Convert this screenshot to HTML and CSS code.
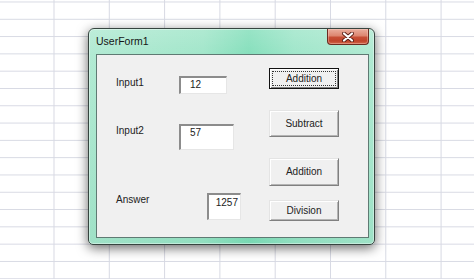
FILE: index.html
```html
<!DOCTYPE html>
<html lang="en">
<head>
    <meta charset="UTF-8">
    <meta name="viewport" content="width=device-width, initial-scale=1.0">
    <title>UserForm1</title>
    <link rel="stylesheet" href="styles.css">
</head>
<body>
    <div class="window">
        <div class="titlebar">
            <span class="title">UserForm1</span>
            <div class="close-btn">
                <svg width="12" height="10" viewBox="0 0 12 10">
                    <path d="M2 1.5 L10 8.5 M10 1.5 L2 8.5" stroke="#5a1f16" stroke-width="4" stroke-linecap="round"/>
                    <path d="M2 1.5 L10 8.5 M10 1.5 L2 8.5" stroke="#ffffff" stroke-width="2.2" stroke-linecap="round"/>
                </svg>
            </div>
        </div>

        <div class="client">
            <div class="fields">
                <div class="field row1">
                    <span class="label">Input1</span>
                    <div class="textbox tb1">12</div>
                </div>
                <div class="field row2">
                    <span class="label">Input2</span>
                    <div class="textbox tb2">57</div>
                </div>
                <div class="field row3">
                    <span class="label label-wide">Answer</span>
                    <div class="textbox tb3">1257</div>
                </div>
            </div>

            <div class="buttons">
                <div class="btn btn-focus">Addition</div>
                <div class="btn btn2">Subtract</div>
                <div class="btn btn3">Addition</div>
                <div class="btn btn4">Division</div>
            </div>
        </div>
    </div>
</body>
</html>
```

FILE: styles.css
```css
* {
    margin: 0;
    padding: 0;
    box-sizing: border-box;
}

body {
    width: 474px;
    height: 279px;
    overflow: hidden;
    background-color: #ffffff;
    /* grille de la feuille Excel */
    background-image:
        linear-gradient(to right, #d7d9e3 1px, transparent 1px),
        linear-gradient(to bottom, #d7d9e3 1px, transparent 1px);
    background-size: 55.3px 17.3px;
    background-position: 53.5px 1.5px;
    font-family: "Liberation Sans", Arial, sans-serif;
    padding: 28px 0 0 88px;
}

.window {
    width: 287px;
    height: 217px;
    display: flex;
    flex-direction: column;
    padding: 0 5px 6px 7px;
    border: 1px solid #36443f;
    border-radius: 6px 6px 5px 5px;
    background:
        linear-gradient(to bottom, rgba(255,255,255,0.15), rgba(255,255,255,0) 26px, rgba(0,150,95,0.1)),
        linear-gradient(to right, #b2ead3 0%, #a2e6ca 40%, #86dfbc 56%, #a0e6ca 72%, #b0ead2 100%);
    box-shadow: inset 0 0 0 1px rgba(255,255,255,0.4), 0 3px 12px rgba(0,0,0,0.6);
}

.titlebar {
    height: 25px;
    display: flex;
    justify-content: space-between;
    align-items: flex-start;
}

.title {
    font-size: 10.5px;
    line-height: 13px;
    color: #151515;
    margin-top: 6px;
}

.close-btn {
    width: 42px;
    height: 16px;
    display: flex;
    align-items: center;
    justify-content: center;
    border: 1px solid #6a2b20;
    border-top: none;
    border-radius: 0 0 4px 4px;
    background: linear-gradient(to bottom, #eaae9e 0%, #dd8670 45%, #c74f36 55%, #c0442b 80%, #d2694d 100%);
    box-shadow: inset 0 0 0 1px rgba(255,220,210,0.35);
}

.close-btn svg {
    display: block;
    margin-top: 1px;
}

.client {
    flex: 1;
    display: flex;
    padding: 13px 0 0 19px;
    background-color: #f0f0f0;
    border: 1px solid #5f7a73;
    font-size: 10px;
    color: #222222;
}

.fields {
    width: 153px;
    margin-top: 8px;
    display: flex;
    flex-direction: column;
}

.field {
    display: flex;
    align-items: flex-start;
}

.row1 {
    height: 18px;
    margin-bottom: 30px;
}

.row2 {
    height: 26px;
    margin-bottom: 43px;
}

.row3 {
    height: 27px;
}

.label {
    width: 63px;
    line-height: 12px;
    padding-top: 1px;
}

.label-wide {
    width: 91px;
}

/* Zones de texte (bordure enfoncée) */
.textbox {
    height: 100%;
    background-color: #ffffff;
    line-height: 12px;
    border-style: solid;
    border-width: 2px 1px 1px 2px;
    border-color: #8c8c8c #e6e6e6 #e6e6e6 #8c8c8c;
}

.tb1 {
    width: 48px;
    padding: 1px 0 0 9px;
}

.tb2 {
    width: 55px;
    padding: 1px 0 0 9px;
}

.tb3 {
    width: 34px;
    padding: 2px 2px 0 0;
    text-align: right;
}

.buttons {
    display: flex;
    flex-direction: column;
}

.btn {
    width: 70px;
    display: flex;
    align-items: center;
    justify-content: center;
    background-color: #f0f0f0;
    border: 1px solid;
    border-color: #e4e4e4 #808080 #808080 #e4e4e4;
    box-shadow: inset 1px 1px #ffffff, inset -1px -1px #b4b4b4;
    line-height: 12px;
}

.btn-focus {
    height: 21px;
    margin-bottom: 21px;
    border-color: #111111;
    box-shadow: inset 1px 1px #ffffff, inset -1px -1px #808080;
    outline: 1px dotted #333333;
    outline-offset: -4px;
}

.btn2 {
    height: 27px;
    margin-bottom: 21px;
}

.btn3 {
    height: 28px;
    margin-bottom: 14px;
}

.btn4 {
    height: 21px;
}
```
